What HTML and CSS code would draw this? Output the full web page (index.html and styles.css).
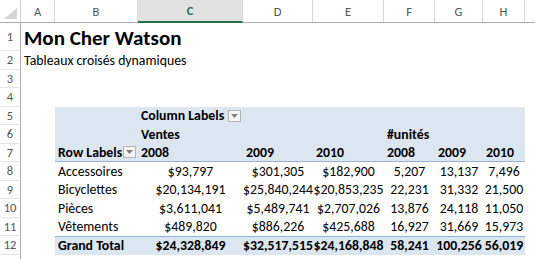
FILE: index.html
```html
<!DOCTYPE html>
<html lang="fr">
<head>
<meta charset="utf-8">
<title>Mon Cher Watson</title>
<link rel="stylesheet" href="styles.css">
</head>
<body>
<div class="sheet">
  <div class="row colhead">
    <div class="corner"><svg width="13" height="11" viewBox="0 0 13 11"><polygon points="13,0 13,11 0,11" fill="#d6d6d6"/></svg></div>
    <div class="ch">A</div>
    <div class="ch">B</div>
    <div class="ch sel">C</div>
    <div class="ch">D</div>
    <div class="ch">E</div>
    <div class="ch">F</div>
    <div class="ch">G</div>
    <div class="ch">H</div>
    <div class="ch last"></div>
  </div>

  <div class="row r1">
    <div class="rh">1</div>
    <div class="title">Mon Cher Watson</div>
  </div>
  <div class="row">
    <div class="rh">2</div>
    <div class="sub">Tableaux croisés dynamiques</div>
  </div>
  <div class="row"><div class="rh">3</div></div>
  <div class="row"><div class="rh">4</div></div>

  <div class="row">
    <div class="rh">5</div>
    <div class="c"></div>
    <div class="c band"></div>
    <div class="c band b lbl">Column Labels <span class="dd"><svg width="7" height="4" viewBox="0 0 7 4"><polygon points="0,0 7,0 3.5,4" fill="#7f7f7f"/></svg></span></div>
    <div class="c band"></div>
    <div class="c band"></div>
    <div class="c band"></div>
    <div class="c band"></div>
    <div class="c band"></div>
  </div>
  <div class="row">
    <div class="rh">6</div>
    <div class="c"></div>
    <div class="c band"></div>
    <div class="c band b">Ventes</div>
    <div class="c band"></div>
    <div class="c band"></div>
    <div class="c band b">#unités</div>
    <div class="c band"></div>
    <div class="c band"></div>
  </div>
  <div class="row">
    <div class="rh">7</div>
    <div class="c"></div>
    <div class="c band b under lbl">Row Labels <span class="dd"><svg width="7" height="4" viewBox="0 0 7 4"><polygon points="0,0 7,0 3.5,4" fill="#7f7f7f"/></svg></span></div>
    <div class="c band b under">2008</div>
    <div class="c band b under">2009</div>
    <div class="c band b under">2010</div>
    <div class="c band b under">2008</div>
    <div class="c band b under">2009</div>
    <div class="c band b under">2010</div>
  </div>

  <div class="row">
    <div class="rh">8</div>
    <div class="c"></div>
    <div class="c">Accessoires</div>
    <div class="c n">$93,797</div>
    <div class="c n">$301,305</div>
    <div class="c n">$182,900</div>
    <div class="c n">5,207</div>
    <div class="c n">13,137</div>
    <div class="c n">7,496</div>
  </div>
  <div class="row">
    <div class="rh">9</div>
    <div class="c"></div>
    <div class="c">Bicyclettes</div>
    <div class="c n">$20,134,191</div>
    <div class="c n">$25,840,244</div>
    <div class="c n">$20,853,235</div>
    <div class="c n">22,231</div>
    <div class="c n">31,332</div>
    <div class="c n">21,500</div>
  </div>
  <div class="row">
    <div class="rh">10</div>
    <div class="c"></div>
    <div class="c">Pièces</div>
    <div class="c n">$3,611,041</div>
    <div class="c n">$5,489,741</div>
    <div class="c n">$2,707,026</div>
    <div class="c n">13,876</div>
    <div class="c n">24,118</div>
    <div class="c n">11,050</div>
  </div>
  <div class="row">
    <div class="rh">11</div>
    <div class="c"></div>
    <div class="c">Vêtements</div>
    <div class="c n">$489,820</div>
    <div class="c n">$886,226</div>
    <div class="c n">$425,688</div>
    <div class="c n">16,927</div>
    <div class="c n">31,669</div>
    <div class="c n">15,973</div>
  </div>
  <div class="row">
    <div class="rh">12</div>
    <div class="c"></div>
    <div class="c total b">Grand Total</div>
    <div class="c total b n">$24,328,849</div>
    <div class="c total b n">$32,517,515</div>
    <div class="c total b n">$24,168,848</div>
    <div class="c total b n">58,241</div>
    <div class="c total b n">100,256</div>
    <div class="c total b n">56,019</div>
  </div>
  <div class="row"><div class="rh">13</div></div>
</div>
</body>
</html>
```
FILE: styles.css
```css
* { box-sizing: border-box; }
html, body { margin: 0; padding: 0; background: #fff; }
body {
  font-family: Carlito, Lato, "Liberation Sans", sans-serif;
  color: #000;
  overflow: hidden;
}
.sheet { width: 535px; }
.row {
  display: grid;
  grid-template-columns: 21px 34px 83px 105px 70px 71px 51px 48px 42px 1fr;
  height: 18.5px;
  font-size: 13.8px;
}
.colhead { height: 23px; border-bottom: 1px solid #ababab; }
.corner {
  border-right: 1px solid #d4d4d4;
  display: flex;
  align-items: flex-end;
  justify-content: flex-end;
  padding: 0 3px 3px 0;
}
.ch {
  display: flex;
  align-items: center;
  justify-content: center;
  font-size: 12.5px;
  color: #555;
  border-right: 1px solid #d8d8d8;
}
.ch.sel {
  background: #e1e1e1;
  color: #217346;
  font-weight: bold;
  border-bottom: 2px solid #217346;
  margin-bottom: -1px;
}
.ch.last { border-right: none; }
.r1 { height: 28px; }
.rh {
  display: flex;
  align-items: center;
  justify-content: center;
  font-size: 12.5px;
  color: #555;
  border-right: 1px solid #ababab;
  border-bottom: 1px solid #e4e4e4;
}
.title {
  grid-column: 2 / -1;
  font-size: 21px;
  font-weight: bold;
  padding-left: 3px;
  display: flex;
  align-items: center;
  padding-top: 1px;
  white-space: nowrap;
}
.sub {
  grid-column: 2 / -1;
  padding-left: 3px;
  display: flex;
  align-items: center;
  white-space: nowrap;
}
.c {
  display: flex;
  align-items: center;
  padding-left: 3px;
  white-space: nowrap;
}
.n { justify-content: center; padding: 0; }
.b { font-weight: bold; }
.band { background: #dce6f1; }
.under { border-bottom: 1px solid #95b3d7; }
.total { background: #dce6f1; border-top: 1px solid #95b3d7; }
.lbl { justify-content: space-between; padding-right: 2px; }
.dd {
  width: 13px;
  height: 12px;
  border: 1px solid #b4b4b4;
  background: #f4f4f4;
  display: flex;
  align-items: center;
  justify-content: center;
}
```
